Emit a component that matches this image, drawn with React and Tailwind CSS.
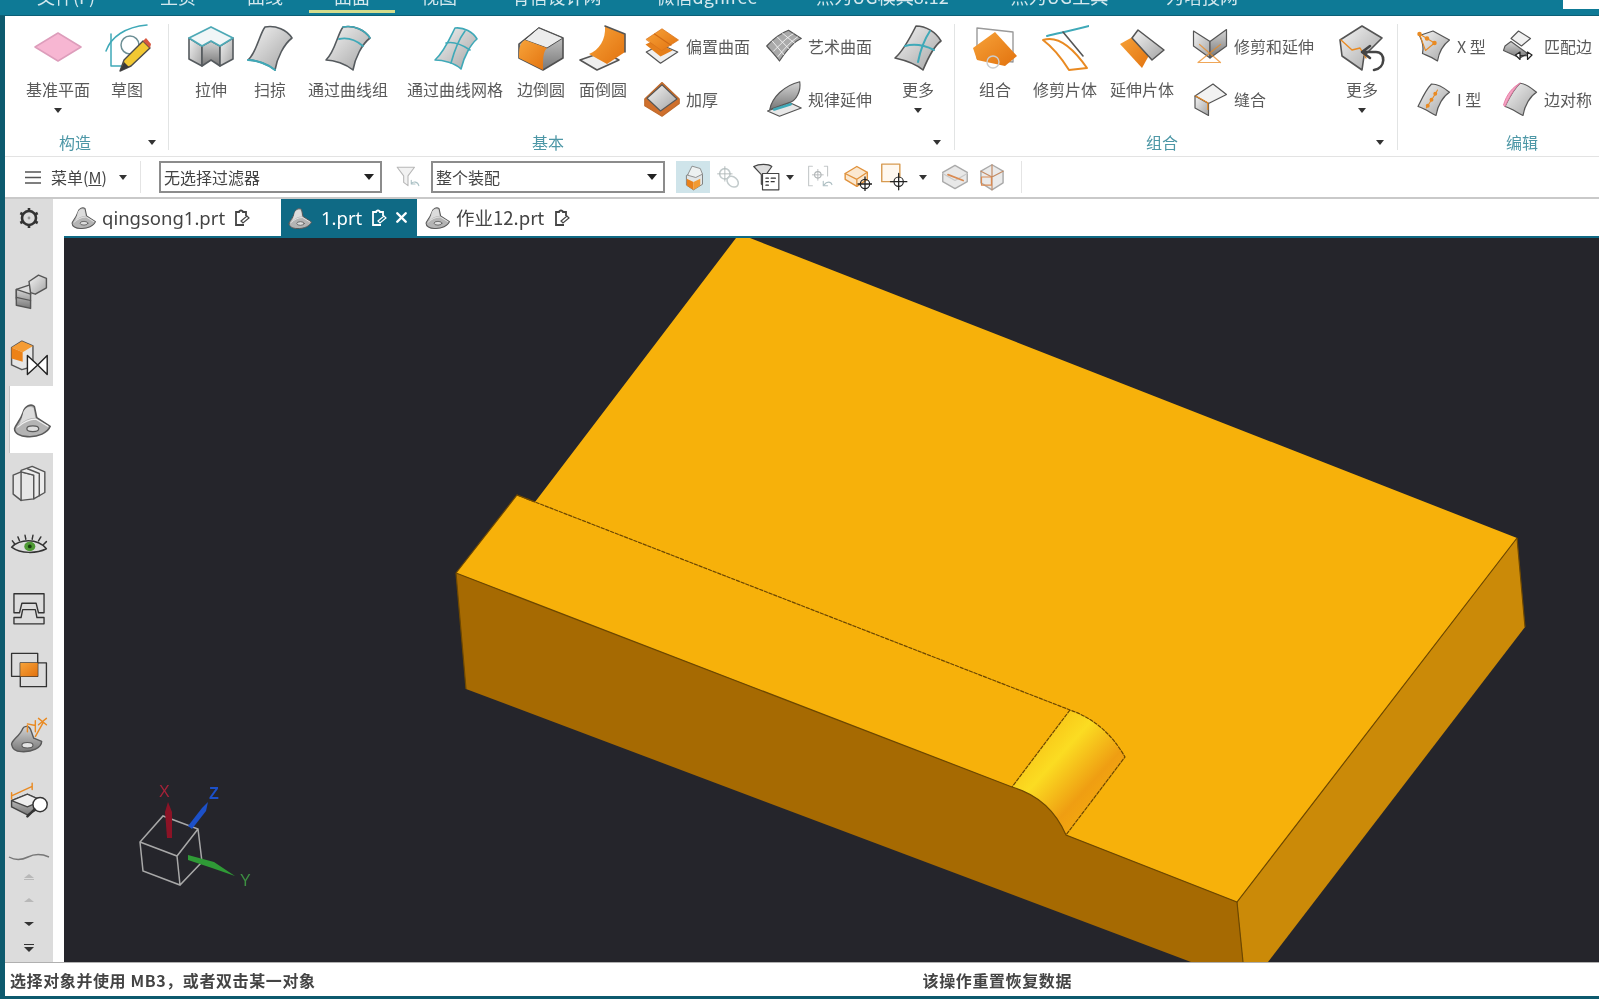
import { X } from "lucide-react";

const CJK = "font-['Noto_Sans_CJK_SC','Noto_Sans',sans-serif]";
const EDGE = "#555a5e";
const TEAL = "#3fa9b8";
const ORG = "#e98a22";

function Defs() {
  return (
    <svg className="block h-0 w-0">
      <defs>
        <linearGradient id="gs" x1="0" y1="0" x2="1" y2="1">
          <stop offset="0" stopColor="#f4f4f4" />
          <stop offset="1" stopColor="#a3a3a3" />
        </linearGradient>
        <linearGradient id="gd" x1="0" y1="0" x2="0" y2="1">
          <stop offset="0" stopColor="#d5d5d5" />
          <stop offset="1" stopColor="#777" />
        </linearGradient>
        <linearGradient id="go" x1="0" y1="0" x2="1" y2="1">
          <stop offset="0" stopColor="#f7a33a" />
          <stop offset="1" stopColor="#e2720e" />
        </linearGradient>
        <linearGradient id="fillet" x1="1012" y1="720" x2="1100" y2="800" gradientUnits="userSpaceOnUse">
          <stop offset="0" stopColor="#f5ae0c" />
          <stop offset="0.5" stopColor="#fbdc22" />
          <stop offset="0.85" stopColor="#ef9e12" />
          <stop offset="1" stopColor="#f3a60f" />
        </linearGradient>
      </defs>
    </svg>
  );
}

function Ic({ s = 48, children }) {
  return (
    <svg width={s} height={s} viewBox="0 0 48 48" className="block shrink-0" fill="none" strokeLinejoin="round" strokeLinecap="round">
      {children}
    </svg>
  );
}

const SURF = "M19 3 C30 1 41 6 46 14 C38 20 31 34 29 46 C22 40 10 36 2 36 C11 28 13 11 19 3Z";

const icons = {
  plane: <polygon points="24,9 47,23 24,37 1,23" fill="#f7b6d2" stroke="#dd9dbb" strokeWidth="1.5" />,
  sketch: (
    <>
      <path d="M3 27 C8 13 22 3 44 1" stroke={TEAL} strokeWidth="1.5" />
      <path d="M8 10 V42 H20" stroke={TEAL} strokeWidth="1.5" />
      <circle cx="27" cy="21" r="9" stroke="#6d8f95" strokeWidth="1.5" />
      <polygon points="17,47 21,36 40,17 47,24 28,42" fill="#f2c832" stroke="#4a4a4a" strokeWidth="1.4" />
      <polygon points="17,47 21,38 26,43" fill="#3a3a3a" />
      <polygon points="40,17 43,14 48,20 47,24" fill="#d7573f" />
    </>
  ),
  extrude: (
    <>
      <polygon points="2,14 15,22 15,42 2,35" fill="url(#gs)" stroke={EDGE} strokeWidth="1.6" />
      <polygon points="15,22 24,17 33,22 33,42 24,36 15,42" fill="url(#gd)" stroke={EDGE} strokeWidth="1.6" />
      <polygon points="33,22 46,14 46,35 33,42" fill="url(#gs)" stroke={EDGE} strokeWidth="1.6" />
      <polygon points="2,14 24,3 46,14 33,22 24,17 15,22" fill="#f1f6f7" stroke="#4ea9b6" strokeWidth="1.8" />
    </>
  ),
  sweep: (
    <>
      <path d={SURF} fill="url(#gs)" stroke={EDGE} strokeWidth="1.6" />
      <path d="M2 36 C10 36 22 40 29 46" stroke={TEAL} strokeWidth="2" />
    </>
  ),
  curves: (
    <>
      <path d={SURF} fill="url(#gs)" stroke={EDGE} strokeWidth="1.6" />
      <path d="M15 15 C24 13 33 17 39 22" stroke={TEAL} strokeWidth="1.8" />
      <path d="M19 3 C30 1 41 6 46 14" stroke={TEAL} strokeWidth="1.6" />
    </>
  ),
  mesh: (
    <>
      <path d="M24 4 C33 3 42 8 46 15 C40 20 33 32 30 45 C24 39 12 36 4 36 C13 28 19 14 24 4Z" fill="url(#gs)" stroke={TEAL} strokeWidth="1.6" />
      <path d="M15 19 C24 17 33 22 39 26" stroke={TEAL} strokeWidth="1.6" />
      <path d="M34 7 C28 15 23 28 20 39" stroke={TEAL} strokeWidth="1.6" />
    </>
  ),
  edge: (
    <>
      <polygon points="22,4 46,14 46,34 26,46 2,34 2,20" fill="url(#gd)" stroke="#505050" strokeWidth="1.6" />
      <polygon points="22,4 46,14 30,24 8,16" fill="#ececec" stroke="#505050" strokeWidth="1" />
      <path d="M8 16 C2 19 2 26 2 34 L26 46 C26 34 26 28 30 24Z" fill="url(#go)" />
    </>
  ),
  face: (
    <>
      <polygon points="1,36 18,46 40,36 24,28" fill="#eee" stroke="#555" strokeWidth="1.6" />
      <path d="M26 2 L46 10 V28 L28 40 L10 30 C20 26 27 16 26 2Z" fill="url(#go)" />
      <path d="M26 2 L46 10 V28" stroke="#555" strokeWidth="1.6" />
    </>
  ),
  offset: (
    <>
      <polygon points="3,32 22,22 45,32 22,47" fill="#efefef" stroke="#555" strokeWidth="1.6" />
      <polygon points="2,22 12,17 38,30 22,38" fill="#e57f1b" />
      <polygon points="3,15 24,1 46,16 24,30" fill="url(#go)" stroke="#d9741c" strokeWidth="1" />
      <path d="M14 8 L36 23" stroke="#d06a14" strokeWidth="1.4" />
    </>
  ),
  studio: (
    <>
      <path d="M1 24 C10 14 22 6 30 3 L47 14 C37 18 26 32 18 44 C12 36 6 30 1 24Z" fill="#aaa" stroke="#555" strokeWidth="1.6" />
      <path d="M8 17 L25 37 M15 12 L32 29 M22 7 L39 21 M10 31 C17 24 28 12 36 8 M16 38 C23 29 33 18 42 12" stroke="#f4f4f4" strokeWidth="1.2" />
    </>
  ),
  thick: (
    <>
      <polygon points="1,24 24,2 47,24 47,30 24,47 1,33" fill="#cf6f2c" stroke="#bf6a2b" strokeWidth="1.5" />
      <polygon points="4,23 24,5 44,24 22,40" fill="url(#gs)" stroke="#555" strokeWidth="1.4" />
    </>
  ),
  law: (
    <>
      <path d="M45 1 C47 14 40 25 33 28 L5 38 C8 22 24 6 45 1Z" fill="url(#gd)" stroke="#555" strokeWidth="1.5" />
      <path d="M2 40 L32 29 L47 36 L18 47Z" fill="#e8e8e8" stroke="#555" strokeWidth="1.5" />
      <path d="M11 38 L33 31" stroke={TEAL} strokeWidth="3.4" />
    </>
  ),
  more1: (
    <>
      <path d="M22 2 C32 2 42 8 47 17 C40 22 34 34 29 46 C22 40 10 36 1 34 C8 28 16 14 22 2Z" fill="url(#gs)" stroke="#555" strokeWidth="1.6" />
      <path d="M11 22 C22 19 32 22 40 26" stroke={TEAL} strokeWidth="2" />
      <path d="M36 7 C30 16 26 28 24 38" stroke={TEAL} strokeWidth="2" />
    </>
  ),
  combine: (
    <>
      <polygon points="6,4 42,8 42,38 6,34" stroke="#9a9a9a" strokeWidth="1.4" />
      <polygon points="2,24 24,8 46,32 34,42 6,36" fill="url(#go)" />
      <circle cx="22" cy="38" r="6" stroke="#ccc" strokeWidth="1.4" />
    </>
  ),
  trim: (
    <>
      <path d="M2 16 C14 12 28 18 46 44 L28 46 C18 30 10 22 2 16Z" fill="#fff" stroke={ORG} strokeWidth="2" />
      <path d="M6 12 C18 9 34 6 48 2" stroke={TEAL} strokeWidth="2" />
      <path d="M22 8 L42 32" stroke="#555" strokeWidth="1.6" />
    </>
  ),
  extend: (
    <>
      <polygon points="2,20 20,10 34,26 24,44" fill="url(#go)" />
      <polygon points="20,6 46,26 34,36 14,14" fill="url(#gs)" stroke="#555" strokeWidth="1.5" />
    </>
  ),
  trimext: (
    <>
      <polygon points="2,4 24,18 24,40 2,24" fill="url(#gs)" stroke="#555" strokeWidth="1.6" />
      <polygon points="46,2 24,18 24,40 46,24" fill="url(#gd)" stroke="#555" strokeWidth="1.6" />
      <path d="M8 46 L38 22 M38 46 L10 22 M8 46 H38" stroke={ORG} strokeWidth="1.6" opacity="0.75" />
    </>
  ),
  sew: (
    <>
      <polygon points="4,20 28,4 46,18 22,30" fill="#f2f2f2" stroke="#555" strokeWidth="1.6" />
      <polygon points="4,20 22,30 22,46 4,36" fill="url(#gs)" stroke="#555" strokeWidth="1.6" />
      <path d="M5 20 L21 29 L21 38" stroke={ORG} strokeWidth="1.6" />
    </>
  ),
  more2: (
    <>
      <polygon points="2,16 24,2 44,14 26,32 24,46 4,32" fill="url(#gs)" stroke="#555" strokeWidth="1.6" />
      <path d="M3 16 L14 26 L22 24 L28 34" stroke={ORG} strokeWidth="1.4" />
      <path d="M32 22 L24 28 L32 34 M25 28 H38 C48 28 48 44 36 46" stroke="#444" strokeWidth="2.6" />
    </>
  ),
  xshape: (
    <>
      <path d="M6 10 L24 4 L46 16 C38 22 32 32 30 44 C22 38 14 36 10 34 C12 26 10 18 6 10Z" fill="url(#gs)" stroke="#555" strokeWidth="1.6" />
      <path d="M6 8 L26 20 M6 8 L14 30 M26 20 L14 30" stroke={ORG} strokeWidth="1.4" />
      <circle cx="6" cy="8" r="3" fill={ORG} />
      <circle cx="16" cy="14" r="3" fill={ORG} />
      <circle cx="26" cy="20" r="3" fill={ORG} />
    </>
  ),
  match: (
    <>
      <polygon points="22,4 38,14 26,24 12,14" fill="#f1f1f1" stroke="#555" strokeWidth="1.5" />
      <polygon points="4,24 12,18 34,34 24,40 2,30" fill="url(#gd)" stroke="#555" strokeWidth="1.5" />
      <path d="M18 36 L24 32 L24 42Z M40 36 L34 32 L34 42Z M24 37 H34" stroke="#222" strokeWidth="1.6" fill="#fff" />
    </>
  ),
  ishape: (
    <>
      <path d="M22 4 C30 4 40 10 46 15 C38 20 30 32 28 46 C20 42 12 36 4 34 C8 26 14 12 22 4Z" fill="url(#gs)" stroke="#555" strokeWidth="1.6" />
      <path d="M30 12 C26 20 20 28 15 36" stroke={ORG} strokeWidth="1.4" />
      <circle cx="27" cy="17" r="2.6" fill={ORG} />
      <circle cx="22" cy="25" r="2.6" fill={ORG} />
      <circle cx="17" cy="33" r="2.6" fill={ORG} />
    </>
  ),
  sym: (
    <>
      <path d="M24 3 C30 3 40 10 46 15 C38 20 30 32 28 46 C20 42 12 36 4 34 C8 26 14 12 24 3Z" fill="url(#gs)" stroke="#555" strokeWidth="1.6" />
      <path d="M24 3 C14 8 6 18 2 32 L4 34 C8 26 14 12 24 3Z" fill="#f3a4c3" stroke="#e67aa4" strokeWidth="1.2" />
    </>
  ),
  part: (
    <>
      <path d="M2 35 C3 30 9 26 13 14 C15 6 23 3 27 7 L30 21 L47 32 C44 40 32 46 18 45 C9 45 2 41 2 35Z" fill="#b4b4b4" stroke="#5a5a5a" strokeWidth="2" />
      <path d="M13 14 C15 8 22 6 26 9 L28 21 C20 21 14 25 8 30 C10 26 12 20 13 14Z" fill="#dcdcdc" />
      <path d="M6 33 C13 27 20 23 29 23 L44 32" stroke="#efefef" strokeWidth="1.5" />
      <ellipse cx="25" cy="35" rx="7.5" ry="3.6" fill="#dedede" stroke="#5a5a5a" strokeWidth="1.6" />
    </>
  ),
  asm: (
    <>
      <polygon points="8,22 26,16 26,28 8,34" fill="#ddd" stroke="#555" strokeWidth="1.8" />
      <polygon points="8,22 8,42 26,46 26,28" fill="url(#gd)" stroke="#555" strokeWidth="1.8" />
      <polygon points="24,12 36,4 46,8 46,20 32,28 26,26" fill="url(#gs)" stroke="#555" strokeWidth="1.8" />
      <path d="M8 32 L26 36" stroke="#555" strokeWidth="1.6" />
    </>
  ),
  constraint: (
    <>
      <polygon points="2,12 15,4 29,10 29,36 15,40 2,34" fill="#e5e5e5" stroke="#555" strokeWidth="1.8" />
      <polygon points="2,12 15,4 29,10 16,18" fill="#f59c34" />
      <polygon points="2,12 16,18 16,30 2,26" fill="#ec8218" />
      <polygon points="22,22 22,46 35,34" fill="#fff" stroke="#222" strokeWidth="1.8" />
      <polygon points="47,22 47,46 35,34" fill="#fff" stroke="#222" strokeWidth="1.8" />
    </>
  ),
  books: (
    <>
      <polygon points="4,14 14,10 30,14 30,44 14,46 4,38" fill="#e7e7e7" stroke="#555" strokeWidth="1.8" />
      <polygon points="14,8 28,3 44,10 44,36 30,44 30,14 14,10" fill="#ececec" stroke="#555" strokeWidth="1.8" />
      <path d="M14 10 V46 M22 6 L37 12 V40" stroke="#555" strokeWidth="1.8" />
    </>
  ),
  eye: (
    <>
      <path d="M2 28 C12 18 34 16 46 30 C34 36 14 37 2 28Z" fill="#ddd" stroke="#333" strokeWidth="1.8" />
      <ellipse cx="25" cy="27" rx="7" ry="6" fill="#4f9a35" />
      <circle cx="25" cy="27" r="2.4" fill="#173c0f" />
      <path d="M6 24 L3 20 M12 20 L10 15 M20 18 L19 13 M28 18 L29 13 M36 20 L39 15 M42 25 L46 21" stroke="#333" strokeWidth="1.8" />
    </>
  ),
  profile: (
    <>
      <path d="M5 30 V6 H43 V30 H36 L33 18 H15 L12 30Z" stroke="#333" strokeWidth="1.7" />
      <path d="M5 44 V36 H14 L16 26 H32 L34 36 H43 V44Z" stroke="#333" strokeWidth="1.7" />
    </>
  ),
  overlap: (
    <>
      <rect x="2" y="3" width="33" height="29" stroke="#333" strokeWidth="1.7" />
      <rect x="13" y="15" width="33" height="30" stroke="#333" strokeWidth="1.7" />
      <rect x="13" y="15" width="22" height="17" fill="url(#go)" />
    </>
  ),
  partdim: (
    <>
      <path d="M2 36 C2 30 12 26 16 16 C18 12 24 12 26 17 L30 28 L40 32 C40 40 28 46 14 45 C8 45 3 42 2 36Z" fill="url(#gd)" stroke="#5a5a5a" strokeWidth="1.8" />
      <ellipse cx="22" cy="37" rx="7" ry="3.5" fill="#e4e4e4" stroke="#5a5a5a" strokeWidth="1.4" />
      <path d="M22 12 V20 M32 6 V20 M22 10 L32 12 M32 26 L42 8 M36 3 L46 11 M46 3 L36 11" stroke={ORG} strokeWidth="1.8" />
    </>
  ),
  lens: (
    <>
      <polygon points="2,26 22,18 40,26 40,34 22,44 2,34" fill="url(#gd)" stroke="#444" strokeWidth="1.8" />
      <polygon points="2,26 22,18 40,26 22,34" fill="#eee" stroke="#444" strokeWidth="1.5" />
      <path d="M2 20 L28 8 M2 16 V24 M28 4 V12" stroke={ORG} strokeWidth="1.8" />
      <circle cx="38" cy="31" r="9" fill="#fff" stroke="#333" strokeWidth="1.8" />
      <path d="M31 37 L22 46" stroke="#333" strokeWidth="3" />
    </>
  ),
  filter: (
    <>
      <path d="M4 6 H36 L24 22 V40 L16 34 V22Z" fill="#f2f2f2" stroke="#b7b7b7" strokeWidth="2" />
      <path d="M44 40 C42 32 34 32 30 36 M30 30 V37 H37" stroke="#aac0c4" strokeWidth="2" />
    </>
  ),
  asmOrange: (
    <>
      <polygon points="12,20 28,12 40,18 40,36 24,46 12,38" fill="#e2e6e7" stroke="#777" strokeWidth="1.6" />
      <polygon points="22,4 36,8 40,18 28,24 14,20" fill="#edf1f1" stroke="#888" strokeWidth="1.6" />
      <polygon points="12,26 24,32 24,46 12,38" fill="#e8801b" />
      <polygon points="24,32 36,26 36,38 24,46" fill="#f19a34" />
    </>
  ),
  link: (
    <>
      <circle cx="17" cy="17" r="10" stroke="#c3cbcc" strokeWidth="3" />
      <ellipse cx="32" cy="32" rx="12" ry="9" transform="rotate(40 32 32)" stroke="#c3cbcc" strokeWidth="3" />
      <path d="M17 3 V31 M3 17 H31" stroke="#aab2b3" strokeWidth="1.6" />
    </>
  ),
  filterDoc: (
    <>
      <path d="M3 6 C12 1 28 1 34 6 L24 20 V42 L16 36 V20Z" fill="#ddd" stroke="#444" strokeWidth="2" />
      <rect x="18" y="18" width="28" height="28" fill="#fff" stroke="#444" strokeWidth="2" />
      <path d="M24 26 H28 M33 26 H40 M24 32 H28 M33 32 H38 M24 38 H28" stroke="#333" strokeWidth="2.4" />
    </>
  ),
  bracket: (
    <>
      <path d="M10 4 H3 V40 H10 M32 4 H38 V22" stroke="#c4c8c9" strokeWidth="2" />
      <circle cx="20" cy="20" r="6" stroke="#b0b5b6" strokeWidth="2" />
      <path d="M20 10 V30 M10 20 H30" stroke="#b0b5b6" strokeWidth="1.6" />
      <path d="M46 38 C44 32 36 32 32 38 M30 32 V40 H38" stroke="#aebfc3" strokeWidth="2" />
    </>
  ),
  boxCross: (
    <>
      <polygon points="2,18 22,6 40,16 40,28 22,40 2,28" fill="#fbe8d0" stroke="#e0923c" strokeWidth="2.4" />
      <path d="M2 18 L22 28 L40 16 M22 28 V40" stroke="#e0923c" strokeWidth="2.2" />
      <circle cx="36" cy="36" r="8" stroke="#222" strokeWidth="2" />
      <path d="M36 24 V48 M24 36 H48" stroke="#222" strokeWidth="2.2" />
    </>
  ),
  squareCross: (
    <>
      <path d="M22 32 H3 V2 H34 V24" stroke="#d79a50" strokeWidth="2.4" fill="#fff8ef" />
      <circle cx="32" cy="32" r="8" stroke="#222" strokeWidth="2" />
      <path d="M32 18 V46 M18 32 H46" stroke="#222" strokeWidth="2.2" />
    </>
  ),
  cut1: (
    <>
      <polygon points="3,16 24,4 45,16 45,32 24,44 3,32" fill="#e8e8e8" stroke="#aaa" strokeWidth="2.4" />
      <path d="M3 18 L24 30 L45 18" stroke="#c8c8c8" strokeWidth="2" />
      <path d="M12 20 L38 30" stroke="#d98a52" strokeWidth="3" />
    </>
  ),
  cut2: (
    <>
      <polygon points="5,14 24,3 43,14 43,34 24,46 5,34" fill="#eaeaea" stroke="#a9a9a9" strokeWidth="2.4" />
      <path d="M24 3 V46 M5 14 L24 24 L43 14" stroke="#c28a63" strokeWidth="2" />
      <rect x="6" y="24" width="17" height="14" fill="none" stroke="#d98a52" strokeWidth="2" />
    </>
  ),
};

function Arrow({ className = "" }) {
  return <span className={`block h-0 w-0 shrink-0 border-x-[4px] border-t-[5px] border-x-transparent border-t-[#333] ${className}`} />;
}

function Big({ w, ml = "", icon, label, arrow }) {
  return (
    <div className={`flex shrink-0 flex-col items-center pt-[8px] ${w} ${ml}`}>
      <Ic>{icons[icon]}</Ic>
      <span className="mt-[5px] whitespace-nowrap text-[16px] leading-[24px] text-[#5a5a5a]">{label}</span>
      {arrow && <Arrow className="mt-[7px]" />}
    </div>
  );
}

function Small({ icon, label, gap = "gap-[6px]" }) {
  return (
    <div className={`flex h-[36px] items-center whitespace-nowrap text-[16px] text-[#5a5a5a] ${gap}`}>
      <Ic s={36}>{icons[icon]}</Ic>
      <span>{label}</span>
    </div>
  );
}

function SmallCol({ w, pl, items }) {
  return (
    <div className={`flex shrink-0 flex-col gap-[17px] pt-[12px] ${w} ${pl}`}>
      {items.map((it) => (
        <Small key={it.label} {...it} />
      ))}
    </div>
  );
}

function Group({ w, label, labelPl, arrowMr, sep = true, children }) {
  return (
    <div className={`flex h-[140px] shrink-0 ${w}`}>
      <div className="flex min-w-0 flex-1 flex-col">
        <div className="flex h-[113px]">{children}</div>
        <div className={`flex h-[26px] items-center ${labelPl}`}>
          <span className="text-[16px] text-[#4d97a6]">{label}</span>
          {arrowMr && <Arrow className={`ml-auto ${arrowMr}`} />}
        </div>
      </div>
      {sep && <span className="mt-[8px] h-[126px] w-px bg-[#e2e4e4]" />}
    </div>
  );
}

function Ribbon() {
  return (
    <div className={`flex h-[141px] shrink-0 overflow-hidden border-b border-[#e3e3e3] bg-white ${CJK}`}>
      <Group w="w-[164px]" label="构造" labelPl="pl-[54px]" arrowMr="mr-[12px]">
        <Big w="w-[72px]" ml="ml-[17px]" icon="plane" label="基准平面" arrow />
        <Big w="w-[66px]" icon="sketch" label="草图" />
      </Group>
      <Group w="w-[786px]" label="基本" labelPl="pl-[363px]" arrowMr="mr-[13px]">
        <Big w="w-[60px]" ml="ml-[12px]" icon="extrude" label="拉伸" />
        <Big w="w-[58px]" icon="sweep" label="扫掠" />
        <Big w="w-[98px]" icon="curves" label="通过曲线组" />
        <Big w="w-[116px]" icon="mesh" label="通过曲线网格" />
        <Big w="w-[56px]" icon="edge" label="边倒圆" />
        <Big w="w-[68px]" icon="face" label="面倒圆" />
        <SmallCol w="w-[129px]" pl="pl-[7px]" items={[{ icon: "offset", label: "偏置曲面" }, { icon: "thick", label: "加厚" }]} />
        <SmallCol w="w-[127px]" items={[{ icon: "studio", label: "艺术曲面" }, { icon: "law", label: "规律延伸" }]} />
        <Big w="w-[50px]" icon="more1" label="更多" arrow />
      </Group>
      <Group w="w-[443px]" label="组合" labelPl="pl-[191px]" arrowMr="mr-[13px]">
        <Big w="w-[60px]" ml="ml-[10px]" icon="combine" label="组合" />
        <Big w="w-[80px]" icon="trim" label="修剪片体" />
        <Big w="w-[74px]" icon="extend" label="延伸片体" />
        <SmallCol w="w-[151px]" pl="pl-[13px]" items={[{ icon: "trimext", label: "修剪和延伸" }, { icon: "sew", label: "缝合" }]} />
        <Big w="w-[64px]" icon="more2" label="更多" arrow />
      </Group>
      <Group w="flex-1" label="编辑" labelPl="pl-[108px]" sep={false}>
        <SmallCol w="w-[104px]" pl="pl-[17px]" items={[{ icon: "xshape", label: "X 型" }, { icon: "ishape", label: "I 型" }]} />
        <SmallCol w="w-[97px]" items={[{ icon: "match", label: "匹配边" }, { icon: "sym", label: "边对称" }]} />
      </Group>
    </div>
  );
}

function Select({ w, label }) {
  return (
    <div className={`flex h-[32px] shrink-0 items-center justify-between border-2 border-[#8c8c8c] bg-white pl-[3px] pr-[6px] text-[16px] text-[#444] ${w}`}>
      <span>{label}</span>
      <span className="block h-0 w-0 border-x-[5px] border-t-[6px] border-x-transparent border-t-[#222]" />
    </div>
  );
}

function TopBtn({ icon, ml, s = 28 }) {
  return (
    <div className={`shrink-0 ${ml}`}>
      <Ic s={s}>{icons[icon]}</Ic>
    </div>
  );
}

function Toolbar() {
  return (
    <div className={`flex h-[42px] shrink-0 items-center border-b-2 border-[#c9c9c9] bg-white ${CJK}`}>
      <svg width="16" height="15" viewBox="0 0 16 15" className="ml-[20px] shrink-0" stroke="#555" strokeWidth="1.4">
        <path d="M0 2 H16 M0 7.5 H16 M0 13 H16" />
      </svg>
      <span className="ml-[10px] w-[62px] shrink-0 whitespace-nowrap text-[16px] text-[#444]">
        菜单(<u>M</u>)
      </span>
      <Arrow className="ml-[6px]" />
      <span className="ml-[13px] h-[32px] w-px bg-[#e4e4e4]" />
      <Select w="ml-[18px] w-[223px]" label="无选择过滤器" />
      <TopBtn icon="filter" ml="ml-[13px]" s={26} />
      <Select w="ml-[10px] w-[234px]" label="整个装配" />
      <div className="ml-[11px] flex h-[32px] w-[34px] shrink-0 items-center justify-center bg-[#cfe4ea]">
        <Ic s={27}>{icons.asmOrange}</Ic>
      </div>
      <TopBtn icon="link" ml="ml-[6px]" s={25} />
      <TopBtn icon="filterDoc" ml="ml-[11px]" />
      <Arrow className="ml-[6px]" />
      <TopBtn icon="bracket" ml="ml-[13px]" s={26} />
      <TopBtn icon="boxCross" ml="ml-[11px]" />
      <TopBtn icon="squareCross" ml="ml-[8px]" />
      <Arrow className="ml-[11px]" />
      <TopBtn icon="cut1" ml="ml-[14px]" />
      <TopBtn icon="cut2" ml="ml-[9px]" />
      <span className="ml-[15px] h-[32px] w-px bg-[#e4e4e4]" />
    </div>
  );
}

function DocIcon({ color = "#444" }) {
  return (
    <svg width="16" height="18" viewBox="0 0 16 18" fill="none" stroke={color} strokeWidth="1.8" className="shrink-0">
      <path d="M12 7 V3 H9 C9 1 5 1 5 3 H2 V16 H10" />
      <path d="M7 12 L13 7 L15 9 L9 14 Z" strokeWidth="1.2" />
    </svg>
  );
}

function Tabs() {
  return (
    <div className="flex h-[37px] shrink-0 items-stretch font-['Noto_Sans',sans-serif] text-[18.5px]">
      <div className="flex w-[217px] items-center text-[#444]">
        <span className="ml-[7px]"><Ic s={25}>{icons.part}</Ic></span>
        <span className="ml-[6px]">qingsong1.prt</span>
        <span className="ml-[9px]"><DocIcon /></span>
      </div>
      <div className="flex w-[136px] items-center bg-[#0f6a85] text-white">
        <span className="ml-[7px]"><Ic s={24}>{icons.part}</Ic></span>
        <span className="ml-[9px]">1.prt</span>
        <span className="ml-[9px]"><DocIcon color="#fff" /></span>
        <X size={17} strokeWidth={3.4} className="ml-[6px]" />
      </div>
      <div className={`flex items-center text-[#444] ${CJK}`}>
        <span className="ml-[8px]"><Ic s={25}>{icons.part}</Ic></span>
        <span className="ml-[6px]">作业12.prt</span>
        <span className="ml-[10px]"><DocIcon /></span>
      </div>
    </div>
  );
}

function Gear() {
  return (
    <svg width="22" height="22" viewBox="0 0 22 22" fill="none">
      <circle cx="11" cy="11" r="7" stroke="#333" strokeWidth="2.6" />
      <circle cx="11" cy="11" r="1.4" fill="#999" />
      <path d="M11 1 V4 M11 18 V21 M2.3 6 L5 7.5 M17 14.5 L19.7 16 M2.3 16 L5 14.5 M17 7.5 L19.7 6" stroke="#333" strokeWidth="2.6" />
    </svg>
  );
}

const sideIcons = [
  { icon: "asm", pt: "mt-[36px]" },
  { icon: "constraint", pt: "mt-[28px]" },
  { icon: "part", active: true },
  { icon: "books", pt: "mt-[11px]" },
  { icon: "eye", pt: "mt-[23px]" },
  { icon: "profile", pt: "mt-[26px]" },
  { icon: "overlap", pt: "mt-[24px]" },
  { icon: "partdim", pt: "mt-[27px]" },
  { icon: "lens", pt: "mt-[26px]" },
];

function Sidebar() {
  return (
    <div className="flex w-[48px] shrink-0 flex-col bg-[#dcdcdc]">
      <div className="flex h-[37px] shrink-0 items-center justify-center pr-[1px]"><Gear /></div>
      <div className="flex flex-col items-center">
        {sideIcons.map((s) =>
          s.active ? (
            <div key={s.icon} className="ml-[4px] mt-[10px] flex h-[67px] w-[44px] items-center justify-center border-l border-[#c4c4c4] bg-white">
              <Ic s={38}>{icons.part}</Ic>
            </div>
          ) : (
            <div key={s.icon} className={s.pt}>
              <Ic s={38}>{icons[s.icon]}</Ic>
            </div>
          )
        )}
      </div>
      <svg width="42" height="10" viewBox="0 0 42 10" fill="none" className="ml-[3px] mt-[34px] shrink-0">
        <path d="M1 5 C8 9 14 8 20 5 C26 2 34 2 41 5" stroke="#777" strokeWidth="1.4" />
      </svg>
      <div className="flex flex-col items-center">
        <span className="mt-[12px] block h-0 w-0 border-x-[5px] border-b-[4px] border-x-transparent border-b-[#b8b8b8]" />
        <span className="mt-[1px] h-px w-[10px] bg-[#b8b8b8]" />
        <span className="mt-[18px] block h-0 w-0 border-x-[5px] border-b-[4px] border-x-transparent border-b-[#b8b8b8]" />
        <span className="mt-[20px] block h-0 w-0 border-x-[5px] border-t-[4px] border-x-transparent border-t-[#333]" />
        <span className="mt-[18px] h-px w-[10px] bg-[#333]" />
        <span className="mt-[2px] block h-0 w-0 border-x-[5px] border-t-[5px] border-x-transparent border-t-[#333]" />
      </div>
    </div>
  );
}

function Viewport() {
  const line = { stroke: "#6e4800", strokeWidth: 1.2, fill: "none" };
  return (
    <svg viewBox="64 238 1535 724" className="block h-[724px] w-full shrink-0 bg-[#25252b]">
      <path d="M456 573 L1012 787 L1070 760 L1066 835 L1237 902 L1243 962 L1191 962 L466 689Z" fill="#a66a02" />
      <polygon points="1237,902 1517,538 1525,627 1268,962 1243,962" fill="#cb8a08" />
      <path d="M736 238 L750 238 L1517 538 L1237 902 L1066 835 L1125 757 Q1105 722 1070 710 L535 502Z" fill="#f7b10a" />
      <path d="M517 495 L1070 710 L1012 787 L456 573Z" fill="#f7b10a" />
      <path d="M1070 710 Q1105 722 1125 757 L1066 835 Q1050 798 1012 787Z" fill="url(#fillet)" />
      <path d="M535 502 L517 495 L456 573" {...line} />
      <path d="M517 495 L1070 710 Q1105 722 1125 757 L1066 835" {...line} strokeDasharray="4 1" />
      <path d="M1070 710 L1012 787" {...line} strokeDasharray="4 1" />
      <path d="M456 573 L1012 787 Q1050 798 1066 835 L1237 902 L1517 538" {...line} />
      <path d="M456 573 L466 689 M1237 902 L1243 962 M1517 538 L1525 627" {...line} />
      <path d="M140 842 L163 816 L198 829 L202 862 L180 885 L143 871Z M140 842 L177 856 L198 829 M177 856 L180 885" stroke="#a8a8a8" strokeWidth="1.5" fill="none" />
      <path d="M167 838 L165 812 L168 802 L172 812 L172 838Z" fill="#8c1326" />
      <path d="M188 826 L202 808 L208 802 L206 811 L192 829Z" fill="#1c50c8" />
      <path d="M188 855 L214 862 L235 876 L212 868 L188 860Z" fill="#2f9a36" />
      <text x="159" y="797" fontSize="16" fill="#a52238" fontFamily="Liberation Sans, sans-serif">X</text>
      <text x="209" y="799" fontSize="16" fill="#1c50c8" fontFamily="Liberation Sans, sans-serif" fontWeight="700">Z</text>
      <text x="240" y="886" fontSize="16" fill="#3d8f42" fontFamily="Liberation Sans, sans-serif">Y</text>
    </svg>
  );
}

const titleTabs = [
  { t: "文件(F)", w: "w-[62px]", ml: "ml-[35px]" },
  { t: "主页", w: "w-[40px]", ml: "ml-[61px]" },
  { t: "曲线", w: "w-[40px]", ml: "ml-[47px]" },
  { t: "曲面", w: "w-[40px]", ml: "ml-[47px]", active: true },
  { t: "视图", w: "w-[40px]", ml: "ml-[47px]" },
  { t: "有信设计网", w: "w-[97px]", ml: "ml-[49px]" },
  { t: "微信dghfree", w: "w-[106px]", ml: "ml-[49px]" },
  { t: "点为UG模具8.12", w: "w-[145px]", ml: "ml-[50px]" },
  { t: "点为UG工具", w: "w-[105px]", ml: "ml-[52px]" },
  { t: "为啥技网", w: "w-[74px]", ml: "ml-[53px]" },
];

function TitleBar() {
  return (
    <div className={`flex h-[16px] shrink-0 overflow-hidden border-b border-[#0b5f76] bg-[#0e7a96] text-[18px] leading-[16px] text-[#d4e8ee] ${CJK}`}>
      {titleTabs.map((tab) => (
        <div key={tab.t} className={`relative shrink-0 text-center ${tab.w} ${tab.ml}`}>
          <span className="-mt-[12px] block whitespace-nowrap">{tab.t}</span>
          {tab.active && <span className="absolute -left-[23px] -right-[23px] top-[10px] h-[3px] bg-[#d3dc8c]" />}
        </div>
      ))}
      <div className="ml-auto h-[9px] w-[36px] bg-white" />
    </div>
  );
}

export default function App() {
  return (
    <div className="h-[999px] w-[1599px] overflow-hidden bg-white blur-[0.4px]">
      <Defs />
      <TitleBar />
      <div className="flex h-[983px] bg-[#0d5a6e] pb-[3px]">
        <div className="w-[5px] shrink-0" />
        <div className="flex min-w-0 flex-1 flex-col bg-white">
          <Ribbon />
          <Toolbar />
          <div className="flex h-[763px] shrink-0">
            <Sidebar />
            <div className="flex min-w-0 flex-1 flex-col pl-[11px]">
              <Tabs />
              <div className="h-[2px] shrink-0 bg-[#0f6a85]" />
              <Viewport />
            </div>
          </div>
          <div className={`flex h-[34px] shrink-0 items-center justify-between border-t border-[#b0b0b0] pl-[5px] text-[16px] font-bold tracking-[0.6px] text-[#444] ${CJK}`}>
            <span>选择对象并使用 MB3，或者双击某一对象</span>
            <span className="mr-[527px]">该操作重置恢复数据</span>
          </div>
        </div>
      </div>
    </div>
  );
}
